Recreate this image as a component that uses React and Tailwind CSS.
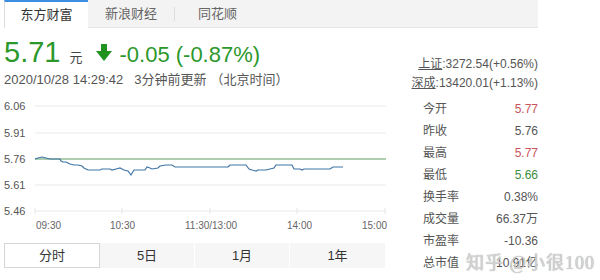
import React from 'react';

const FONT = "font-['Liberation_Sans','Noto_Sans_CJK_SC',sans-serif]";

// price points as [x, y] in page coordinates (svg top = page y 96)
const pts = [
  [35, 159], [38, 158], [42, 157], [46, 158], [50, 159], [60, 159], [61, 161], [63, 162],
  [66, 162], [68, 163], [70, 164], [74, 165], [78, 165], [82, 166], [84, 168], [86, 169],
  [88, 170], [100, 170], [102, 169], [110, 169], [112, 170], [116, 169], [120, 168], [122, 169],
  [124, 170], [128, 171], [131, 175], [134, 170], [145, 170], [147, 167], [150, 168], [152, 169],
  [158, 168], [160, 166], [166, 165], [172, 165], [175, 167], [228, 167], [230, 165], [246, 165],
  [249, 169], [252, 170], [256, 171], [258, 170], [266, 170], [270, 169], [274, 168], [276, 165],
  [292, 165], [294, 169], [300, 169], [302, 170], [304, 169], [330, 169], [333, 167], [343, 167],
];

const stats = [
  { label: '今开', value: '5.77', color: 'text-[#c9545c]' },
  { label: '昨收', value: '5.76', color: 'text-[#555]' },
  { label: '最高', value: '5.77', color: 'text-[#c9545c]' },
  { label: '最低', value: '5.66', color: 'text-[#3e8e3e]' },
  { label: '换手率', value: '0.38%', color: 'text-[#555]' },
  { label: '成交量', value: '66.37万', color: 'text-[#555]' },
  { label: '市盈率', value: '-10.36', color: 'text-[#555]' },
  { label: '总市值', value: '10.91亿', color: 'text-[#555]' },
];

function Chart() {
  const grid = [
    { y: 10, label: '6.06' },
    { y: 37, label: '5.91' },
    { y: 63, label: '5.76' },
    { y: 89, label: '5.61' },
    { y: 115, label: '5.46' },
  ];
  const line = pts.map(([x, y]) => `${x},${y - 96}`).join(' ');
  return (
    <svg width="390" height="136" className="block">
      {grid.map((g) => (
        <g key={g.label}>
          <line x1="35" x2="386" y1={g.y} y2={g.y} stroke="#e9e9e9" strokeWidth="1" />
          <text x="4" y={g.y + 4} fontSize="11" fill="#555" fontFamily="Liberation Sans, sans-serif">
            {g.label}
          </text>
        </g>
      ))}
      {[35, 122, 210, 297, 385].map((x) => (
        <line key={x} x1={x} x2={x} y1="112" y2="118" stroke="#e6e6e6" />
      ))}
      <line x1="35" x2="386" y1="63" y2="63" stroke="#6aa56a" strokeWidth="1" />
      <polyline points={line} fill="none" stroke="#3f74a6" strokeWidth="1.2" />
      <g fontSize="10" fill="#666" fontFamily="Liberation Sans, sans-serif">
        <text x="36" y="133">09:30</text>
        <text x="110" y="133">10:30</text>
        <text x="185" y="133">11:30/13:00</text>
        <text x="287" y="133">14:00</text>
        <text x="362" y="133">15:00</text>
      </g>
    </svg>
  );
}

function DownArrow() {
  return (
    <svg width="16" height="17" viewBox="0 0 16 17" className="ml-[14px] mr-[7px] self-center">
      <path d="M5 0 H11 V7 H16 L8 17 L0 7 H5 Z" fill="#1f921f" />
    </svg>
  );
}

export default function App() {
  return (
    <div className={`relative w-[600px] h-[280px] bg-white overflow-hidden ${FONT}`}>
      {/* top tabs */}
      <div className="flex h-[28px] w-[538px]">
        <div className="w-[4px] bg-white" />
        <div className="w-[84px] h-[28px] bg-white border-t-2 border-[#3b8ee0] border-l border-l-[#dcdcdc] flex items-center justify-center text-[13px] text-[#333]">
          东方财富
        </div>
        <div className="flex-1 bg-[#f3f3f3] flex items-center text-[13px] text-[#666] border-b border-[#e6e6e6]">
          <div className="w-[86px] text-center">新浪财经</div>
          <div className="w-px h-[14px] bg-[#dcdcdc]" />
          <div className="w-[85px] text-center">同花顺</div>
        </div>
      </div>

      <div className="flex">
        {/* left column */}
        <div className="w-[390px]">
          <div className="flex items-baseline pl-[4px] mt-[8px] h-[32px] text-[#2c982c]">
            <span className="text-[29px] leading-[32px]">5.71</span>
            <span className="text-[13px] text-[#444] ml-[9px]">元</span>
            <DownArrow />
            <span className="text-[22px] leading-[32px]">-0.05 (-0.87%)</span>
          </div>
          <div className="pl-[4px] mt-[4px] h-[16px] text-[13px] leading-[16px] text-[#555] flex">
            <span>2020/10/28 14:29:42</span>
            <span className="ml-[11px]">3分钟前更新</span>
            <span className="ml-[4px]">（北京时间）</span>
          </div>
          <div className="mt-[8px]">
            <Chart />
          </div>
          <div className="ml-[4px] mt-[11px] w-[381px] h-[25px] flex text-[13px] text-[#333]">
            <div className="w-[96px] bg-white border border-[#d6d6d6] flex items-center justify-center">分时</div>
            <div className="w-[95px] bg-[#f6f6f6] border-r border-white flex items-center justify-center">5日</div>
            <div className="w-[95px] bg-[#f6f6f6] border-r border-white flex items-center justify-center">1月</div>
            <div className="w-[95px] bg-[#f6f6f6] flex items-center justify-center">1年</div>
          </div>
        </div>

        {/* right column */}
        <div className="w-[148px]">
          <div className="mt-[27px] flex flex-col items-end text-[12px] leading-[18px] text-[#555]">
            <div>
              <span className="underline">上证</span>:3272.54(+0.56%)
            </div>
            <div className="mt-[1px]">
              <span className="underline">深成</span>:13420.01(+1.13%)
            </div>
          </div>
          <div className="mt-[6px] pl-[33px] text-[12px]">
            {stats.map((s) => (
              <div key={s.label} className="h-[22px] flex items-center justify-between">
                <span className="text-[#555]">{s.label}</span>
                <span className={s.color}>{s.value}</span>
              </div>
            ))}
          </div>
        </div>
      </div>

      {/* watermark */}
      <div className="absolute left-[466px] top-[250px] text-[18px] text-[#d4d4d4] tracking-[1px] font-['Liberation_Serif','Noto_Sans_CJK_SC',serif] [text-shadow:0_0_1px_#999]">
        知乎 @小很100
      </div>
    </div>
  );
}
